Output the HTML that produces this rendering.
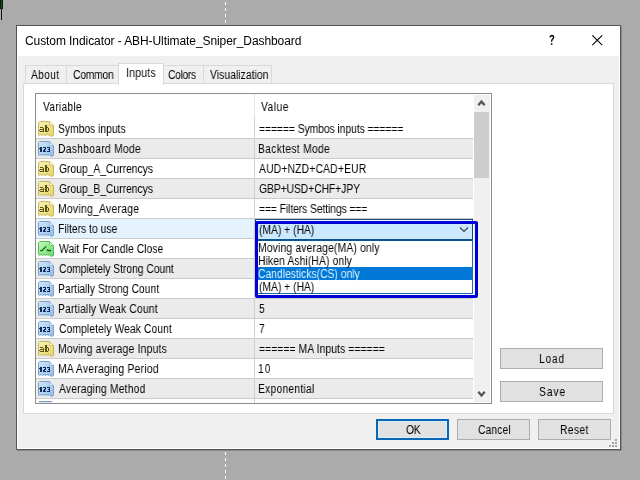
<!DOCTYPE html>
<html><head><meta charset="utf-8">
<style>
*{margin:0;padding:0;box-sizing:border-box}
html,body{width:640px;height:480px;overflow:hidden;background:#ababab;-webkit-font-smoothing:antialiased;font-family:"Liberation Sans",sans-serif;color:#000}
.a{position:absolute}
.t{position:absolute;will-change:transform;white-space:nowrap;font-size:12px;line-height:13px;transform:scaleX(0.86);transform-origin:0 0}
</style></head><body>
<svg width="0" height="0" style="position:absolute">
<defs>
<linearGradient id="gy" x1="0" y1="0" x2="1" y2="1"><stop offset="0" stop-color="#f6f0b8"/><stop offset="1" stop-color="#e4d468"/></linearGradient>
<linearGradient id="gb" x1="0" y1="0" x2="1" y2="1"><stop offset="0" stop-color="#d4e6f8"/><stop offset="1" stop-color="#92bde9"/></linearGradient>
<linearGradient id="gg" x1="0" y1="0" x2="1" y2="1"><stop offset="0" stop-color="#c4f8bc"/><stop offset="1" stop-color="#6cd86c"/></linearGradient>
<symbol id="iab" viewBox="0 0 16 16"><path d="M0.5 1.5L1.5 0.5L11.5 0.5L15.5 4.5L15.5 14.5L13 15.5L12 13.5L10.5 14.4L9 13.5L7.5 14.4L6 13.5L4.5 14.4L3 13.5L1.5 14.4L0.5 13.8Z" fill="url(#gy)" stroke="#c8b858"/><path d="M11.5 0.5L11.5 4.5L15.5 4.5Z" fill="#faf6d8" stroke="#d4c674" stroke-width="1"/><path d="M2 6h1v1h-1zM3 6h1v1h-1zM4 6h1v1h-1zM5 7h1v1h-1zM2 8h1v1h-1zM3 8h1v1h-1zM4 8h1v1h-1zM5 8h1v1h-1zM1 9h1v1h-1zM5 9h1v1h-1zM2 10h1v1h-1zM3 10h1v1h-1zM4 10h1v1h-1zM5 10h1v1h-1zM7 4h1v1h-1zM8 4h1v1h-1zM7 5h1v1h-1zM8 5h1v1h-1zM7 6h1v1h-1zM8 6h1v1h-1zM9 6h1v1h-1zM7 7h1v1h-1zM8 7h1v1h-1zM10 7h1v1h-1zM7 8h1v1h-1zM8 8h1v1h-1zM10 8h1v1h-1zM7 9h1v1h-1zM8 9h1v1h-1zM10 9h1v1h-1zM7 10h1v1h-1zM8 10h1v1h-1zM9 10h1v1h-1z" fill="#5a5012" shape-rendering="crispEdges"/></symbol>
<symbol id="in" viewBox="0 0 16 16"><path d="M0.5 1.5L1.5 0.5L11.5 0.5L15.5 4.5L15.5 14.5L13 15.5L12 13.5L10.5 14.4L9 13.5L7.5 14.4L6 13.5L4.5 14.4L3 13.5L1.5 14.4L0.5 13.8Z" fill="url(#gb)" stroke="#7ca0cc"/><path d="M11.5 0.5L11.5 4.5L15.5 4.5Z" fill="#e6f0fb" stroke="#9cb8dc" stroke-width="1"/><path d="M2 6h1v1h-1zM3 6h1v1h-1zM1 7h1v1h-1zM2 7h1v1h-1zM3 7h1v1h-1zM2 8h1v1h-1zM3 8h1v1h-1zM2 9h1v1h-1zM3 9h1v1h-1zM2 10h1v1h-1zM3 10h1v1h-1zM5 6h1v1h-1zM6 6h1v1h-1zM7 6h1v1h-1zM7 7h1v1h-1zM6 8h1v1h-1zM7 8h1v1h-1zM5 9h1v1h-1zM6 9h1v1h-1zM5 10h1v1h-1zM6 10h1v1h-1zM7 10h1v1h-1zM9 6h1v1h-1zM10 6h1v1h-1zM11 6h1v1h-1zM11 7h1v1h-1zM10 8h1v1h-1zM11 8h1v1h-1zM11 9h1v1h-1zM9 10h1v1h-1zM10 10h1v1h-1zM11 10h1v1h-1z" fill="#0e2e5c" shape-rendering="crispEdges"/></symbol>
<symbol id="ib" viewBox="0 0 16 16"><path d="M0.5 1.5L1.5 0.5L11.5 0.5L15.5 4.5L15.5 14.5L13 15.5L12 13.5L10.5 14.4L9 13.5L7.5 14.4L6 13.5L4.5 14.4L3 13.5L1.5 14.4L0.5 13.8Z" fill="url(#gg)" stroke="#58bc58"/><path d="M11.5 0.5L11.5 4.5L15.5 4.5Z" fill="#d4f6cc" stroke="#74cc74" stroke-width="1"/><path d="M2.2 9.6L3.8 9.6L8.2 5.4M9.2 8.4L9.9 9.5L13 9.5" stroke="#0e5e0e" stroke-width="1.3" fill="none"/></symbol>
</defs></svg>
<!-- candle -->
<div class="a" style="left:0;top:0;width:3px;height:9px;background:#0f4f1f;border:1px solid #0a200a"></div>
<div class="a" style="left:1px;top:9px;width:1px;height:11px;background:#111"></div>
<!-- dashed line -->
<div class="a" style="left:225px;top:2px;width:1px;height:21px;background:repeating-linear-gradient(to bottom,#fff 0,#fff 3px,transparent 3px,transparent 6px)"></div>

<!-- dialog -->
<div class="a" style="left:16px;top:25px;width:605px;height:425px;background:#555"></div>
<div class="a" style="left:621px;top:26px;width:1px;height:425px;background:#8a8a8a"></div>
<div class="a" style="left:17px;top:450px;width:605px;height:1px;background:#8a8a8a"></div>
<div class="a" style="left:225px;top:452px;width:1px;height:28px;background:repeating-linear-gradient(to bottom,#fff 0,#fff 3px,transparent 3px,transparent 6px)"></div>
<div class="a" style="left:17px;top:26px;width:603px;height:423px;background:#fff"></div>
<div class="a" style="left:18px;top:56px;width:601px;height:392px;background:#f0f0f0"></div>

<!-- title -->
<div class="t" style="left:25px;top:34px;font-size:12px;line-height:15px;transform:none;letter-spacing:-0.08px">Custom Indicator - ABH-Ultimate_Sniper_Dashboard</div>
<svg class="a" style="left:547px;top:34px" width="9" height="12"><path d="M3 3.4Q3.1 1.5 4.9 1.5Q6.7 1.6 6.6 3.3Q6.5 4.5 5.4 5.3Q4.6 6 4.6 7.8" stroke="#000" stroke-width="1.35" fill="none"/><rect x="3.9" y="9.3" width="1.5" height="1.6" fill="#000"/></svg>
<svg class="a" style="left:592px;top:35px" width="11" height="11"><path d="M0.3 0.3L10.2 10.2M10.2 0.3L0.3 10.2" stroke="#000" stroke-width="1.05"/></svg>

<!-- tabs -->
<div class="a" style="left:25px;top:65px;width:42px;height:19px;background:#f0f0f0;border:1px solid #d9d9d9;border-bottom:none"></div>
<div class="a" style="left:66px;top:65px;width:53px;height:19px;background:#f0f0f0;border:1px solid #d9d9d9;border-bottom:none"></div>
<div class="a" style="left:163px;top:65px;width:41px;height:19px;background:#f0f0f0;border:1px solid #d9d9d9;border-bottom:none"></div>
<div class="a" style="left:203px;top:65px;width:69px;height:19px;background:#f0f0f0;border:1px solid #d9d9d9;border-bottom:none"></div>
<!-- panel -->
<div class="a" style="left:23px;top:83px;width:591px;height:331px;background:#fff;border:1px solid #d9d9d9"></div>
<div class="a" style="left:118px;top:63px;width:46px;height:22px;background:#fff;border:1px solid #d9d9d9;border-bottom:none"></div>
<div class="t" style="left:31px;top:69px;letter-spacing:0.29px">About</div>
<div class="t" style="left:73px;top:69px;letter-spacing:-0.24px">Common</div>
<div class="t" style="left:126px;top:67px;letter-spacing:0.34px">Inputs</div>
<div class="t" style="left:168px;top:69px;letter-spacing:-0.40px">Colors</div>
<div class="t" style="left:210px;top:69px;letter-spacing:0.07px">Visualization</div>

<!-- grid -->
<div class="a" style="left:35px;top:93px;width:457px;height:311px;background:#fff;border:1px solid #8c8c8c"></div>
<div class="a" style="left:254px;top:94px;width:1px;height:24px;background:#e5e5e5"></div>
<div class="t" style="left:43px;top:101px;letter-spacing:0.24px">Variable</div>
<div class="t" style="left:261px;top:101px;letter-spacing:0.50px">Value</div>

<div id="rows">
<div class="a" style="left:36px;top:138px;width:437px;height:1px;background:#cacaca"></div>
<svg class="a" style="left:38px;top:121px;will-change:transform" width="16" height="16"><use href="#iab"/></svg>
<div class="t" style="left:58px;top:123px;letter-spacing:-0.00px">Symbos inputs</div>
<div class="t" style="left:259px;top:123px;letter-spacing:-0.06px">====== Symbos inputs ======</div>
<div class="a" style="left:36px;top:139px;width:437px;height:19px;background:#ebebeb"></div>
<div class="a" style="left:36px;top:158px;width:437px;height:1px;background:#cacaca"></div>
<svg class="a" style="left:38px;top:141px;will-change:transform" width="16" height="16"><use href="#in"/></svg>
<div class="t" style="left:58px;top:143px;letter-spacing:0.31px">Dashboard Mode</div>
<div class="t" style="left:258px;top:143px;letter-spacing:0.34px">Backtest Mode</div>
<div class="a" style="left:36px;top:178px;width:437px;height:1px;background:#cacaca"></div>
<svg class="a" style="left:38px;top:161px;will-change:transform" width="16" height="16"><use href="#iab"/></svg>
<div class="t" style="left:59px;top:163px;letter-spacing:-0.01px">Group_A_Currencys</div>
<div class="t" style="left:259px;top:163px;letter-spacing:0.21px">AUD+NZD+CAD+EUR</div>
<div class="a" style="left:36px;top:179px;width:437px;height:19px;background:#ebebeb"></div>
<div class="a" style="left:36px;top:198px;width:437px;height:1px;background:#cacaca"></div>
<svg class="a" style="left:38px;top:181px;will-change:transform" width="16" height="16"><use href="#iab"/></svg>
<div class="t" style="left:59px;top:183px;letter-spacing:-0.01px">Group_B_Currencys</div>
<div class="t" style="left:259px;top:183px;letter-spacing:-0.07px">GBP+USD+CHF+JPY</div>
<div class="a" style="left:36px;top:218px;width:437px;height:1px;background:#cacaca"></div>
<svg class="a" style="left:38px;top:201px;will-change:transform" width="16" height="16"><use href="#iab"/></svg>
<div class="t" style="left:58px;top:203px;letter-spacing:0.34px">Moving_Average</div>
<div class="t" style="left:259px;top:203px;letter-spacing:-0.09px">=== Filters Settings ===</div>
<div class="a" style="left:36px;top:219px;width:437px;height:19px;background:#e5f3ff"></div>
<div class="a" style="left:36px;top:238px;width:437px;height:1px;background:#cacaca"></div>
<svg class="a" style="left:38px;top:221px;will-change:transform" width="16" height="16"><use href="#in"/></svg>
<div class="t" style="left:58px;top:223px;letter-spacing:0.01px">Filters to use</div>
<div class="a" style="left:36px;top:258px;width:437px;height:1px;background:#cacaca"></div>
<svg class="a" style="left:38px;top:241px;will-change:transform" width="16" height="16"><use href="#ib"/></svg>
<div class="t" style="left:59px;top:243px;letter-spacing:0.05px">Wait For Candle Close</div>
<div class="a" style="left:36px;top:259px;width:437px;height:19px;background:#ebebeb"></div>
<div class="a" style="left:36px;top:278px;width:437px;height:1px;background:#cacaca"></div>
<svg class="a" style="left:38px;top:261px;will-change:transform" width="16" height="16"><use href="#in"/></svg>
<div class="t" style="left:59px;top:263px;letter-spacing:-0.03px">Completely Strong Count</div>
<div class="a" style="left:36px;top:298px;width:437px;height:1px;background:#cacaca"></div>
<svg class="a" style="left:38px;top:281px;will-change:transform" width="16" height="16"><use href="#in"/></svg>
<div class="t" style="left:58px;top:283px;letter-spacing:0.04px">Partially Strong Count</div>
<div class="a" style="left:36px;top:299px;width:437px;height:19px;background:#ebebeb"></div>
<div class="a" style="left:36px;top:318px;width:437px;height:1px;background:#cacaca"></div>
<svg class="a" style="left:38px;top:301px;will-change:transform" width="16" height="16"><use href="#in"/></svg>
<div class="t" style="left:58px;top:303px;letter-spacing:0.21px">Partially Weak Count</div>
<div class="t" style="left:259px;top:303px">5</div>
<div class="a" style="left:36px;top:338px;width:437px;height:1px;background:#cacaca"></div>
<svg class="a" style="left:38px;top:321px;will-change:transform" width="16" height="16"><use href="#in"/></svg>
<div class="t" style="left:59px;top:323px;letter-spacing:0.10px">Completely Weak Count</div>
<div class="t" style="left:259px;top:323px">7</div>
<div class="a" style="left:36px;top:339px;width:437px;height:19px;background:#ebebeb"></div>
<div class="a" style="left:36px;top:358px;width:437px;height:1px;background:#cacaca"></div>
<svg class="a" style="left:38px;top:341px;will-change:transform" width="16" height="16"><use href="#iab"/></svg>
<div class="t" style="left:58px;top:343px;letter-spacing:0.25px">Moving average Inputs</div>
<div class="t" style="left:259px;top:343px;letter-spacing:0.10px">====== MA Inputs ======</div>
<div class="a" style="left:36px;top:378px;width:437px;height:1px;background:#cacaca"></div>
<svg class="a" style="left:38px;top:361px;will-change:transform" width="16" height="16"><use href="#in"/></svg>
<div class="t" style="left:58px;top:363px;letter-spacing:0.28px">MA Averaging Period</div>
<div class="t" style="left:258px;top:363px;letter-spacing:1.00px">10</div>
<div class="a" style="left:36px;top:379px;width:437px;height:19px;background:#ebebeb"></div>
<div class="a" style="left:36px;top:398px;width:437px;height:1px;background:#cacaca"></div>
<svg class="a" style="left:38px;top:381px;will-change:transform" width="16" height="16"><use href="#in"/></svg>
<div class="t" style="left:59px;top:383px;letter-spacing:0.21px">Averaging Method</div>
<div class="t" style="left:258px;top:383px;letter-spacing:0.26px">Exponential</div>
<div class="a" style="left:39px;top:401px;width:13px;height:1px;background:#8098b8"></div><div class="a" style="left:38px;top:402px;width:15px;height:1px;background:#dce8f4"></div>
<div class="a" style="left:254px;top:118px;width:1px;height:285px;background:#d0d0d0"></div>
</div><!--endrows-->

<!-- scrollbar -->
<div class="a" style="left:474px;top:95px;width:16px;height:307px;background:#f0f0f0"></div>
<div class="a" style="left:474px;top:112px;width:15px;height:66px;background:#cdcdcd"></div>
<svg class="a" style="left:477px;top:99px" width="9" height="9"><path d="M1.3 6.3L4.5 2.6L7.7 6.3" stroke="#555" stroke-width="2.3" fill="none"/></svg>
<svg class="a" style="left:477px;top:389px" width="9" height="9"><path d="M1.3 2.7L4.5 6.4L7.7 2.7" stroke="#555" stroke-width="2.3" fill="none"/></svg>

<!-- dropdown -->
<div class="a" style="left:255px;top:219px;width:218px;height:22px;background:#cce8ff;border:1px solid #0f4c81;border-bottom:2px solid #0d5592;box-shadow:inset 0 1px #f4faff"></div>
<div class="t" style="left:259px;top:224px;letter-spacing:0.00px">(MA) + (HA)</div>
<svg class="a" style="left:459px;top:226px" width="10" height="7"><path d="M1 1.5L5 5.5L9 1.5" stroke="#444" stroke-width="1.1" fill="none"/></svg>
<div class="a" style="left:255px;top:241px;width:218px;height:53px;background:#fff;border:1px solid #1a6fb0;border-top:none"></div>
<div class="a" style="left:256px;top:267px;width:216px;height:13px;background:#0078d7"></div>
<div class="t" style="left:258px;top:242px;letter-spacing:0.21px">Moving average(MA) only</div>
<div class="t" style="left:258px;top:255px;letter-spacing:0.13px">Hiken Ashi(HA) only</div>
<div class="t" style="left:258px;top:268px;color:#e0f4ff;letter-spacing:0.01px">Candlesticks(CS) only</div>
<div class="t" style="left:259px;top:281px;letter-spacing:0.00px">(MA) + (HA)</div>
<div class="a" style="left:255px;top:221px;width:223px;height:77px;border:3px solid #0000d6;border-radius:2px"></div>

<!-- grip -->
<svg class="a" style="left:608px;top:438px" width="10" height="10"><path d="M7 1h2v2h-2zM4 4h2v2h-2zM7 4h2v2h-2zM1 7h2v2h-2zM4 7h2v2h-2zM7 7h2v2h-2z" fill="#a6a6a6"/></svg>
<!-- buttons -->
<div class="a" style="left:500px;top:348px;width:103px;height:21px;background:#e1e1e1;border:1px solid #adadad"></div>
<div class="t" style="left:539px;top:353px;letter-spacing:0.85px">Load</div>
<div class="a" style="left:500px;top:381px;width:103px;height:21px;background:#e1e1e1;border:1px solid #adadad"></div>
<div class="t" style="left:538.5px;top:386px;letter-spacing:1.05px">Save</div>
<div class="a" style="left:376px;top:419px;width:73px;height:21px;background:#e1e1e1;border:2px solid #0a66b4;box-shadow:inset 0 0 0 1px #d4f0fc"></div>
<div class="t" style="left:405.5px;top:424px;letter-spacing:-0.30px">OK</div>
<div class="a" style="left:457px;top:419px;width:73px;height:21px;background:#e1e1e1;border:1px solid #adadad"></div>
<div class="t" style="left:478px;top:424px;letter-spacing:0.12px">Cancel</div>
<div class="a" style="left:538px;top:419px;width:73px;height:21px;background:#e1e1e1;border:1px solid #adadad"></div>
<div class="t" style="left:560px;top:424px;letter-spacing:0.40px">Reset</div>
</body></html>
